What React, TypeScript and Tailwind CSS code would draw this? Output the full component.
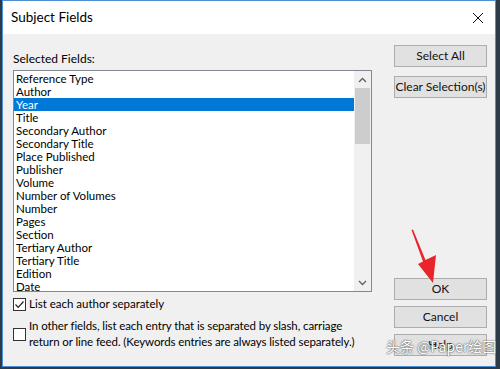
import React from "react";

const fields = [
  "Reference Type",
  "Author",
  "Year",
  "Title",
  "Secondary Author",
  "Secondary Title",
  "Place Published",
  "Publisher",
  "Volume",
  "Number of Volumes",
  "Number",
  "Pages",
  "Section",
  "Tertiary Author",
  "Tertiary Title",
  "Edition",
  "Date",
];

function Btn({ children, className = "" }: { children: React.ReactNode; className?: string }) {
  return (
    <div
      className={
        "w-[93px] h-[22px] flex items-center justify-center border border-[#adadad] bg-[#e1e1e1] text-[12px] text-[#111] whitespace-nowrap " +
        className
      }
    >
      {children}
    </div>
  );
}

export default function App() {
  return (
    <div
      className="w-[500px] h-[369px] bg-[#2d3a48] relative overflow-hidden"
      style={{ fontFamily: 'Lato, "Noto Sans", sans-serif' }}
    >
      <div className="absolute left-[2px] top-0 w-[494px] h-[367px] border border-[#4f8fd6] bg-[#f0f0f0] flex flex-col">
        {/* title bar */}
        <div className="h-[33px] bg-white flex items-center justify-between pl-[8px] pr-[10px] shrink-0">
          <span className="text-[13.5px] text-black">Subject Fields</span>
          <svg width="12" height="12" viewBox="0 0 12 12" className="mr-[1px]">
            <path d="M1 1 L11 11 M11 1 L1 11" stroke="#111" strokeWidth="1" />
          </svg>
        </div>
        {/* body */}
        <div className="flex flex-1">
          <div className="flex flex-col pl-[10px] w-[375px]">
            <div className="text-[12px] text-black mt-[17px] h-[16px] leading-[16px]">Selected Fields:</div>
            <div className="mt-[3px] w-[359px] h-[222px] border border-[#828790] bg-white flex">
              <div className="flex-1 flex flex-col pt-[1px]">
                {fields.map((f) => (
                  <div
                    key={f}
                    className={
                      "h-[13px] leading-[13px] text-[11.5px] pl-[2px] whitespace-nowrap " +
                      (f === "Year" ? "bg-[#0078d7] text-white" : "text-black")
                    }
                  >
                    {f}
                  </div>
                ))}
              </div>
              <div className="w-[17px] bg-[#f0f0f0] flex flex-col items-center">
                <div className="h-[17px] flex items-center justify-center">
                  <svg width="9" height="6" viewBox="0 0 9 6">
                    <path d="M1 5 L4.5 1.5 L8 5" stroke="#606060" strokeWidth="1.3" fill="none" />
                  </svg>
                </div>
                <div className="w-[15px] h-[56px] bg-[#cdcdcd]" />
                <div className="flex-1" />
                <div className="h-[17px] flex items-center justify-center">
                  <svg width="9" height="6" viewBox="0 0 9 6">
                    <path d="M1 1 L4.5 4.5 L8 1" stroke="#606060" strokeWidth="1.3" fill="none" />
                  </svg>
                </div>
              </div>
            </div>
            <div className="flex items-center mt-[5px] h-[14px]">
              <div className="w-[13px] h-[13px] border border-[#333] bg-white flex items-center justify-center">
                <svg width="11" height="11" viewBox="0 0 11 11">
                  <path d="M1.5 5.5 L4.2 8.3 L9.5 2.5" stroke="#222" strokeWidth="1.2" fill="none" />
                </svg>
              </div>
              <span className="ml-[3px] text-[11.5px] text-black leading-[14px] whitespace-nowrap">List each author separately</span>
            </div>
            <div className="flex items-center mt-[7px]">
              <div className="w-[13px] h-[13px] border border-[#333] bg-white shrink-0" />
              <span className="ml-[3px] text-[11.5px] text-black leading-[16px] whitespace-nowrap tracking-[-0.1px]">
                In other fields, list each entry that is separated by slash, carriage
                <br />
                return or line feed. (Keywords entries are always listed separately.)
              </span>
            </div>
          </div>
          <div className="flex flex-col pl-[16px] pt-[11px]">
            <Btn>Select All</Btn>
            <Btn className="mt-[9px]">Clear Selection(s)</Btn>
            <Btn className="mt-[180px]">OK</Btn>
            <Btn className="mt-[6px]">Cancel</Btn>
            <Btn className="mt-[6px]">Help</Btn>
          </div>
        </div>
      </div>
      {/* red arrow annotation */}
      <svg className="absolute left-0 top-0" width="500" height="369" viewBox="0 0 500 369">
        <path d="M411.5 230 L413 229.5 L425.5 260 L436 255 L433 283 L418 264 L423 261.5 Z" fill="#e8262a" />
      </svg>
      {/* watermark */}
      <div
        className="absolute left-[386px] top-[336px] text-[14px] text-white whitespace-nowrap"
        style={{ textShadow: "0 0 2px #555, 0 0 1px #555", fontFamily: '"Noto Sans CJK SC", sans-serif' }}
      >
        头条 @Paper绘图
      </div>
    </div>
  );
}
